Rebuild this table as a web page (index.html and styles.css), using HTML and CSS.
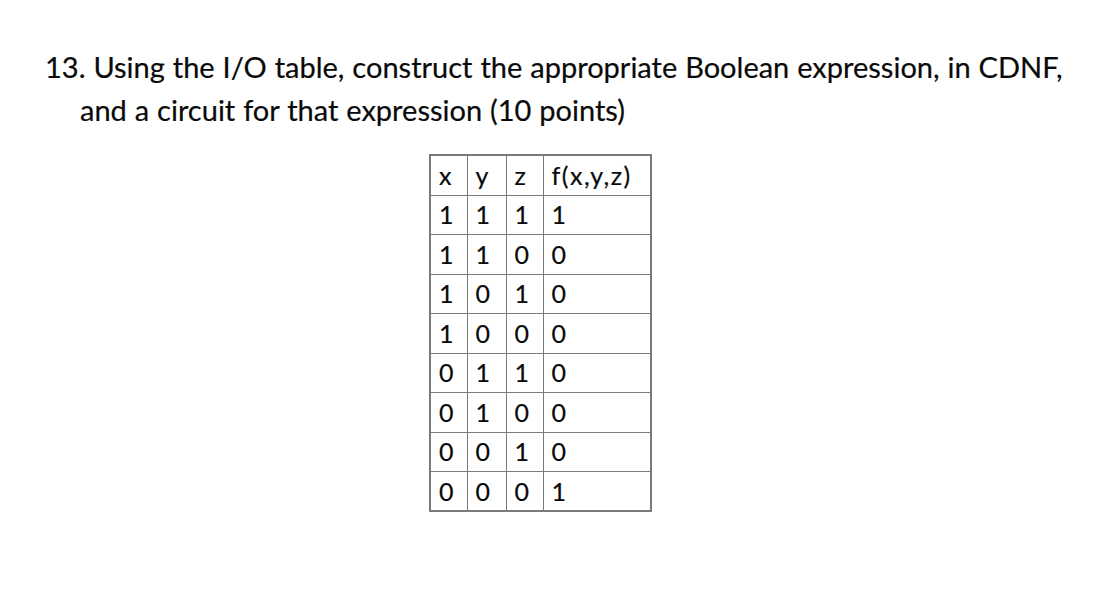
FILE: index.html
```html
<!DOCTYPE html>
<html>
<head>
<meta charset="utf-8">
<link rel="stylesheet" href="styles.css">
</head>
<body>
<div class="page">
  <p class="question">13. Using the I/O table, construct the appropriate Boolean expression, in CDNF, and a circuit for that expression (10 points)</p>
  <table class="io">
    <tr class="head"><td class="c1">x</td><td class="c2">y</td><td class="c3">z</td><td class="c4">f(x,y,z)</td></tr>
    <tr><td>1</td><td>1</td><td>1</td><td>1</td></tr>
    <tr><td>1</td><td>1</td><td>0</td><td>0</td></tr>
    <tr><td>1</td><td>0</td><td>1</td><td>0</td></tr>
    <tr><td>1</td><td>0</td><td>0</td><td>0</td></tr>
    <tr><td>0</td><td>1</td><td>1</td><td>0</td></tr>
    <tr><td>0</td><td>1</td><td>0</td><td>0</td></tr>
    <tr><td>0</td><td>0</td><td>1</td><td>0</td></tr>
    <tr><td>0</td><td>0</td><td>0</td><td>1</td></tr>
  </table>
</div>
</body>
</html>
```
FILE: styles.css
```css
html, body {
  margin: 0;
  padding: 0;
  background: #ffffff;
}
.page {
  padding-top: 45px;
  font-family: Lato, "Liberation Sans", sans-serif;
  color: #0a0a0a;
  -webkit-text-stroke: 0.2px #0a0a0a;
}
.question {
  margin: 0;
  width: 990px;
  padding-left: 80px;
  text-indent: -35px;
  font-size: 29px;
  line-height: 43px;
  word-spacing: 0.5px;
}
.io {
  margin-top: 23px;
  margin-left: 429px;
  border-collapse: collapse;
  border: 2px solid #7a7a7a;
  font-size: 25px;
}
.io td {
  border: 1px solid #7a7a7a;
  height: 39.5px;
  padding: 0 0 0 8px;
  box-sizing: border-box;
  line-height: 1;
  vertical-align: middle;
}
.io .head td {
  height: 40px;
}
.c1 { width: 37px; }
.c2 { width: 39px; }
.c3 { width: 37px; }
.c4 { width: 108px; letter-spacing: 1.5px; }
```
